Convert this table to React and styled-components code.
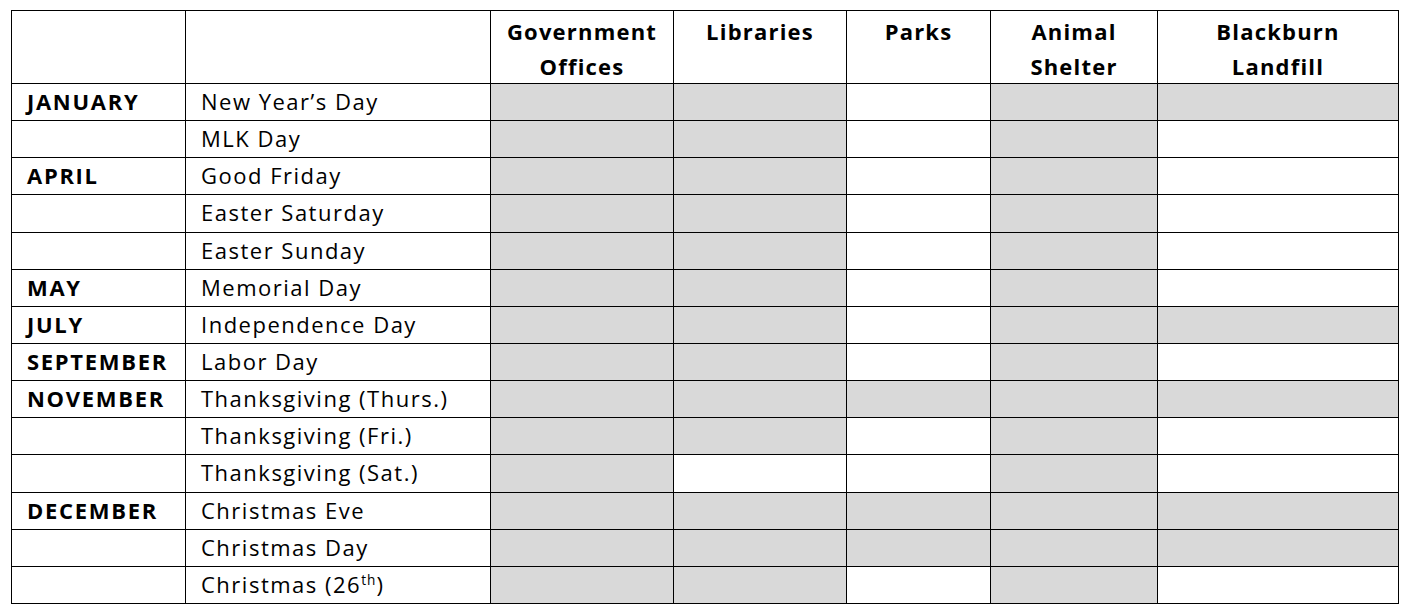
import React from "react";
import styled, { createGlobalStyle } from "styled-components";

const GlobalStyle = createGlobalStyle`
  body {
    margin: 0;
    background: #ffffff;
    font-family: "Open Sans", "Noto Sans", sans-serif;
    color: #000000;
  }
`;

const Page = styled.div`
  padding: 10px 0 0 11px;
`;

const Table = styled.table`
  border-collapse: collapse;
  table-layout: fixed;
  width: 1387px;
  font-size: 22px;
  letter-spacing: 1.5px;
`;

const HeadCell = styled.th`
  border: 1px solid #000;
  height: 69px;
  padding: 3px 4px 0;
  vertical-align: top;
  text-align: center;
  font-weight: 700;
  line-height: 34.5px;
  letter-spacing: 1.2px;
`;

const Row = styled.tr`
  height: 37.15px;
`;

const MonthCell = styled.td`
  border: 1px solid #000;
  padding: 2px 0 0 15px;
  vertical-align: top;
  font-weight: 700;
  line-height: 30px;
  letter-spacing: 1.7px;
  white-space: nowrap;
`;

const NameCell = styled.td`
  border: 1px solid #000;
  padding: 2px 0 0 15px;
  vertical-align: top;
  line-height: 30px;
  white-space: nowrap;
`;

const StatusCell = styled.td`
  border: 1px solid #000;
  padding: 0;
  background: ${(p) => (p.$closed ? "#d9d9d9" : "#ffffff")};
`;

const Sup = styled.sup`
  font-size: 0.62em;
  letter-spacing: 1px;
  line-height: 0;
  vertical-align: 0.6em;
`;

const columns = [
  ["Government", "Offices"],
  ["Libraries"],
  ["Parks"],
  ["Animal", "Shelter"],
  ["Blackburn", "Landfill"],
];

const widths = [174, 305, 183, 173, 144, 167, 241];

// 1 = closed (grey), 0 = open
const holidays = [
  { month: "JANUARY", name: "New Year\u2019s Day", closed: [1, 1, 0, 1, 1] },
  { month: "", name: "MLK Day", closed: [1, 1, 0, 1, 0] },
  { month: "APRIL", name: "Good Friday", closed: [1, 1, 0, 1, 0] },
  { month: "", name: "Easter Saturday", closed: [1, 1, 0, 1, 0] },
  { month: "", name: "Easter Sunday", closed: [1, 1, 0, 1, 0] },
  { month: "MAY", name: "Memorial Day", closed: [1, 1, 0, 1, 0] },
  { month: "JULY", name: "Independence Day", closed: [1, 1, 0, 1, 1] },
  { month: "SEPTEMBER", name: "Labor Day", closed: [1, 1, 0, 1, 0] },
  { month: "NOVEMBER", name: "Thanksgiving (Thurs.)", closed: [1, 1, 1, 1, 1] },
  { month: "", name: "Thanksgiving (Fri.)", closed: [1, 1, 0, 1, 0] },
  { month: "", name: "Thanksgiving (Sat.)", closed: [1, 0, 0, 1, 0] },
  { month: "DECEMBER", name: "Christmas Eve", closed: [1, 1, 1, 1, 1] },
  { month: "", name: "Christmas Day", closed: [1, 1, 1, 1, 1] },
  {
    month: "",
    name: (
      <>
        Christmas (26<Sup>th</Sup>)
      </>
    ),
    closed: [1, 1, 0, 1, 0],
  },
];

export default function App() {
  return (
    <Page>
      <GlobalStyle />
      <Table>
        <colgroup>
          {widths.map((w, i) => (
            <col key={i} style={{ width: w }} />
          ))}
        </colgroup>
        <thead>
          <tr>
            <HeadCell />
            <HeadCell />
            {columns.map((lines) => (
              <HeadCell key={lines[0]}>
                {lines.map((l) => (
                  <div key={l}>{l}</div>
                ))}
              </HeadCell>
            ))}
          </tr>
        </thead>
        <tbody>
          {holidays.map((h, i) => (
            <Row key={i}>
              <MonthCell>{h.month}</MonthCell>
              <NameCell>{h.name}</NameCell>
              {h.closed.map((c, j) => (
                <StatusCell key={j} $closed={c === 1} />
              ))}
            </Row>
          ))}
        </tbody>
      </Table>
    </Page>
  );
}
